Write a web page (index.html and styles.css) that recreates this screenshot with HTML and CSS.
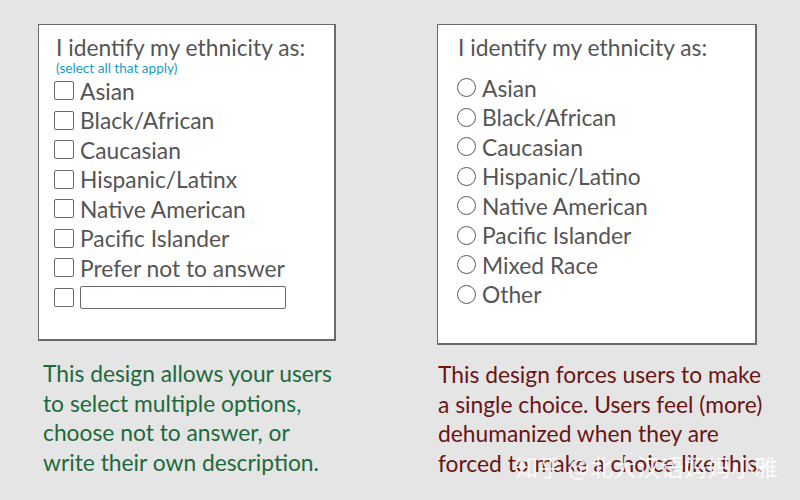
FILE: index.html
```html
<!DOCTYPE html>
<html lang="en">
<head>
  <meta charset="UTF-8">
  <meta name="viewport" content="width=device-width, initial-scale=1.0">
  <title>Ethnicity question</title>
  <link rel="stylesheet" href="styles.css">
</head>
<body>

<div class="page">

  <!-- multiple choice version -->
  <div class="column left">
    <div class="card card-check">
      <div class="question">I identify my ethnicity as:</div>
      <div class="hint">(select all that apply)</div>
      <div class="option"><span class="box"></span>Asian</div>
      <div class="option"><span class="box"></span>Black/African</div>
      <div class="option"><span class="box"></span>Caucasian</div>
      <div class="option"><span class="box"></span>Hispanic/Latinx</div>
      <div class="option"><span class="box"></span>Native American</div>
      <div class="option"><span class="box"></span>Pacific Islander</div>
      <div class="option"><span class="box"></span>Prefer not to answer</div>
      <div class="option"><span class="box"></span><span class="write-in"></span></div>
    </div>
    <p class="caption good">This design allows your users<br>to select multiple options,<br>choose not to answer, or<br>write their own description.</p>
  </div>

  <!-- single choice version -->
  <div class="column right">
    <div class="card card-radio">
      <div class="question">I identify my ethnicity as:</div>
      <div class="option"><span class="dot"></span>Asian</div>
      <div class="option"><span class="dot"></span>Black/African</div>
      <div class="option"><span class="dot"></span>Caucasian</div>
      <div class="option"><span class="dot"></span>Hispanic/Latino</div>
      <div class="option"><span class="dot"></span>Native American</div>
      <div class="option"><span class="dot"></span>Pacific Islander</div>
      <div class="option"><span class="dot"></span>Mixed Race</div>
      <div class="option"><span class="dot"></span>Other</div>
    </div>
    <p class="caption bad">This design forces users to make<br>a single choice. Users feel (more)<br>dehumanized when they are<br>forced to make a choice like this.</p>
  </div>

  <div class="watermark">知乎 @北大汉语妈妈小雅</div>
</div>

</body>
</html>
```

FILE: styles.css
```css
body {
    margin: 0;
    background-color: #e5e5e5;
    font-family: Lato, "Open Sans", sans-serif;
    color: #555;
}

.page {
    position: relative;
    width: 800px;
    height: 500px;
    display: flex;
    overflow: hidden;
}

.column {
    padding-top: 24px;
}
.left {
    width: 300px;
    padding-left: 38px;
}
.right {
    width: 330px;
    padding-left: 99px;
}

.card {
    box-sizing: border-box;
    background-color: #fff;
    border: 1px solid #6a6a6a;
    border-right-width: 2px;
    border-bottom-width: 2px;
}
.card-check {
    width: 298px;
    height: 317px;
    padding: 9px 0 0 15px;
}
.card-radio {
    width: 320px;
    height: 321px;
    padding: 9px 0 0 18px;
}

.question {
    font-size: 22.8px;
    line-height: 26px;
    padding-left: 2px;
}
.card-radio .question {
    margin-bottom: 13px;
}

.hint {
    font-size: 13.6px;
    line-height: 16px;
    color: #1b9cc4;
    padding-left: 2px;
}

.option {
    display: flex;
    align-items: center;
    height: 29.5px;
    font-size: 22.8px;
}

.box {
    box-sizing: border-box;
    width: 20px;
    height: 19px;
    border: 1.5px solid #6a6a6a;
    border-radius: 2px;
    margin-right: 6px;
}

.dot {
    box-sizing: border-box;
    width: 19px;
    height: 19px;
    border: 1.5px solid #5a5a5a;
    border-radius: 50%;
    margin-left: 1px;
    margin-right: 6px;
}

.write-in {
    box-sizing: border-box;
    width: 206px;
    height: 23px;
    border: 1.5px solid #6a6a6a;
    border-radius: 2px;
}

.caption {
    font-size: 22.8px;
    line-height: 29.5px;
    margin: 15px 0 0 0;
    white-space: nowrap;
}
.good {
    color: #1c6a3c;
    margin-left: 5px;
    margin-top: 18px;
}
.bad {
    color: #6a1414;
    margin-left: 1px;
}

.watermark {
    position: absolute;
    left: 515px;
    top: 449px;
    font-family: "Noto Sans CJK SC", sans-serif;
    font-size: 23px;
    color: rgba(255, 255, 255, 0.85);
    letter-spacing: 0.5px;
}
```
